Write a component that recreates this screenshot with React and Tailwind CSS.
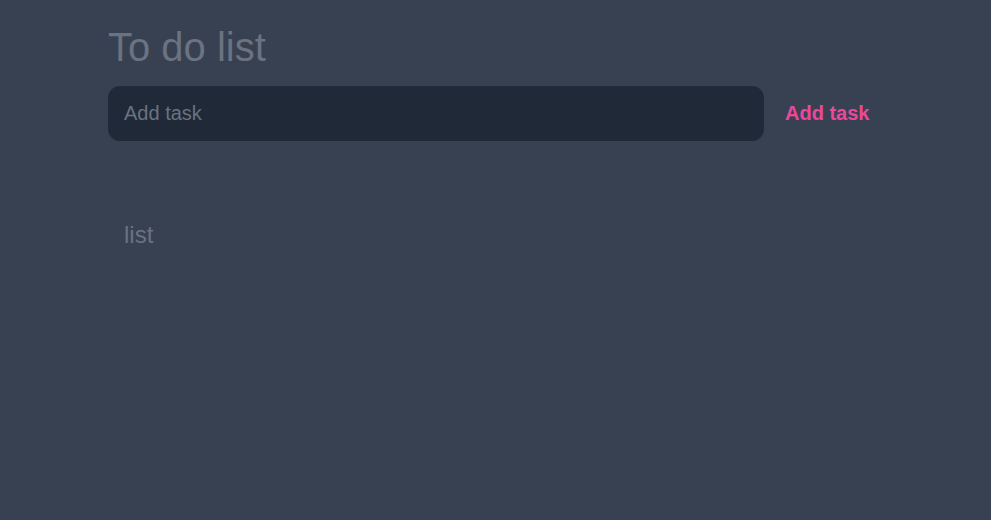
export default function App() {
  return (
    <div className="min-h-screen w-full bg-[#374151] font-['Liberation_Sans',Arial,sans-serif]">
      <div className="pl-[108px] pt-[27px]">
        <h1 className="text-[40px] leading-[40px] text-[#6b7280]">To do list</h1>
        <div className="mt-[19px] flex items-center">
          <input
            className="h-[55px] w-[656px] rounded-xl bg-[#1f2937] px-4 text-xl text-[#9ca3af] placeholder-[#6b7280] outline-none"
            placeholder="Add task"
          />
          <button className="ml-[5px] px-4 pb-[2px] text-xl font-bold text-[#ec4899]">Add task</button>
        </div>
        <ul className="mt-[78px] px-4">
          <li className="text-2xl leading-8 text-[#6b7280]">list</li>
        </ul>
      </div>
    </div>
  );
}
